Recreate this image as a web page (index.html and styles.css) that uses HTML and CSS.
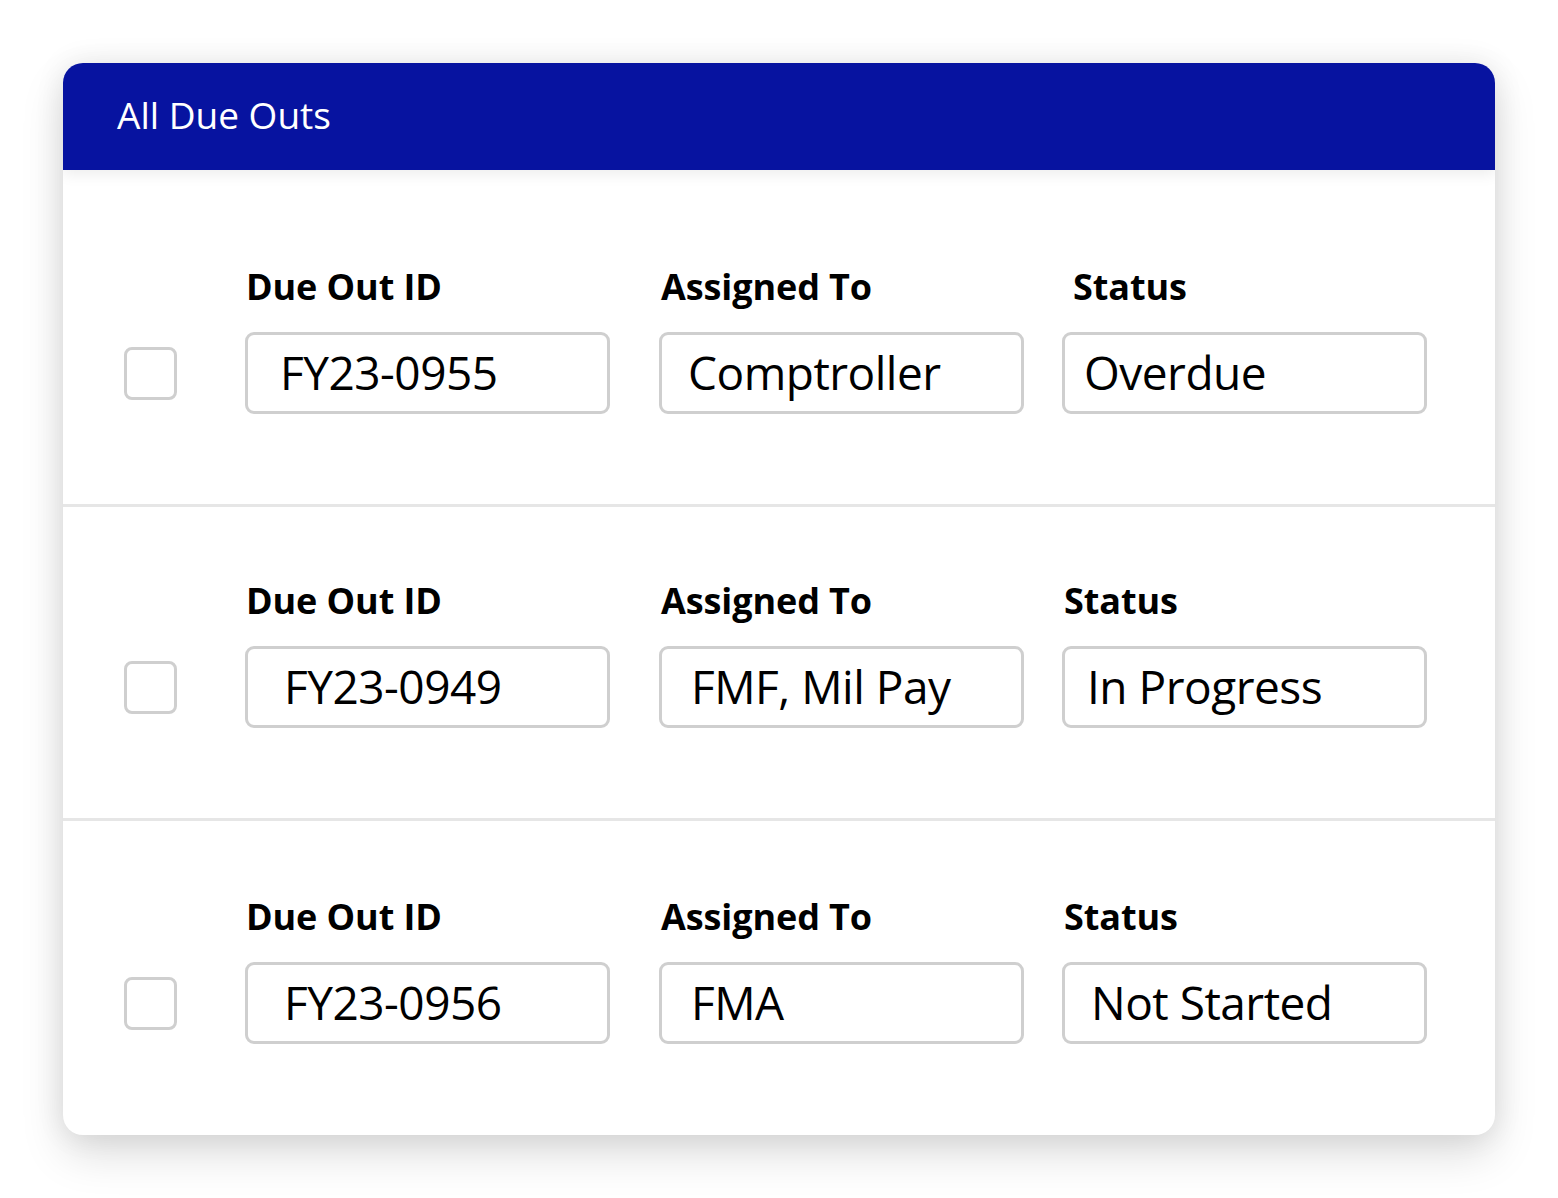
FILE: index.html
```html
<!DOCTYPE html>
<html lang="en">
<head>
<meta charset="utf-8">
<title>All Due Outs</title>
<link rel="stylesheet" href="styles.css">
</head>
<body>
<div class="card">
  <div class="card-header">All Due Outs</div>

  <div class="row row-first">
    <span class="checkbox"></span>
    <div class="field field-id">
      <div class="label">Due Out ID</div>
      <div class="input">FY23-0955</div>
    </div>
    <div class="field field-assigned">
      <div class="label">Assigned To</div>
      <div class="input">Comptroller</div>
    </div>
    <div class="field field-status">
      <div class="label label-status-first">Status</div>
      <div class="input">Overdue</div>
    </div>
  </div>

  <div class="row row-second">
    <span class="checkbox"></span>
    <div class="field field-id">
      <div class="label">Due Out ID</div>
      <div class="input input-shift">FY23-0949</div>
    </div>
    <div class="field field-assigned">
      <div class="label">Assigned To</div>
      <div class="input input-shift">FMF, Mil Pay</div>
    </div>
    <div class="field field-status">
      <div class="label">Status</div>
      <div class="input input-shift">In Progress</div>
    </div>
  </div>

  <div class="row row-third">
    <span class="checkbox"></span>
    <div class="field field-id">
      <div class="label">Due Out ID</div>
      <div class="input input-shift">FY23-0956</div>
    </div>
    <div class="field field-assigned">
      <div class="label">Assigned To</div>
      <div class="input input-shift">FMA</div>
    </div>
    <div class="field field-status">
      <div class="label">Status</div>
      <div class="input input-shift input-shift-more">Not Started</div>
    </div>
  </div>
</div>
</body>
</html>
```

FILE: styles.css
```css
html, body {
  margin: 0;
  padding: 0;
  background: #ffffff;
}

body {
  font-family: "Open Sans", "Noto Sans", sans-serif;
  color: #000;
  padding: 63px 0 64px 63px;
}

.card {
  width: 1432px;
  background: #ffffff;
  border-radius: 20px;
  box-shadow: 0 20px 44px rgba(0, 0, 0, 0.13), 0 0 30px rgba(0, 0, 0, 0.09);
  overflow: hidden;
}

.card-header {
  height: 107px;
  box-sizing: border-box;
  background: #0713a0;
  color: #ffffff;
  font-size: 37px;
  line-height: 42px;
  padding: 31px 0 0 54px;
  box-shadow: 0 4px 14px rgba(0, 0, 0, 0.08);
  position: relative;
}

.row {
  display: flex;
  align-items: flex-end;
  padding: 0 0 90px 61px;
}

.row-first {
  padding-top: 97px;
}

.row-second {
  border-top: 3px solid #e6e6e6;
  padding-top: 74px;
}

.row-third {
  border-top: 3px solid #e6e6e6;
  padding-top: 76px;
  padding-bottom: 91px;
}

.checkbox {
  flex: none;
  width: 53px;
  height: 53px;
  box-sizing: border-box;
  border: 3px solid #cfcfcf;
  border-radius: 8px;
  margin-bottom: 14px;
}

.field {
  flex: none;
  width: 365px;
}

.field-id {
  margin-left: 68px;
}

.field-assigned {
  margin-left: 49px;
}

.field-status {
  margin-left: 38px;
}

.label {
  font-weight: 700;
  font-size: 36px;
  line-height: 40px;
  height: 40px;
  padding-left: 1px;
  letter-spacing: -0.1px;
  margin-bottom: 25px;
}

.field-assigned .label {
  padding-left: 2px;
}

.field-status .label {
  padding-left: 2px;
}

.field-status .label-status-first {
  padding-left: 11px;
}

.input {
  height: 82px;
  box-sizing: border-box;
  border: 3px solid #cfcfcf;
  border-radius: 9px;
  display: flex;
  align-items: center;
  font-size: 46px;
  letter-spacing: -0.5px;
  padding-left: 32px;
  padding-bottom: 2px;
}

.field-assigned .input {
  padding-left: 26px;
}

.field-status .input {
  padding-left: 19px;
}

.field-id .input-shift {
  padding-left: 36px;
}

.field-assigned .input-shift {
  padding-left: 29px;
}

.field-status .input-shift {
  padding-left: 22px;
}

.field-status .input-shift-more {
  padding-left: 26px;
}
```
